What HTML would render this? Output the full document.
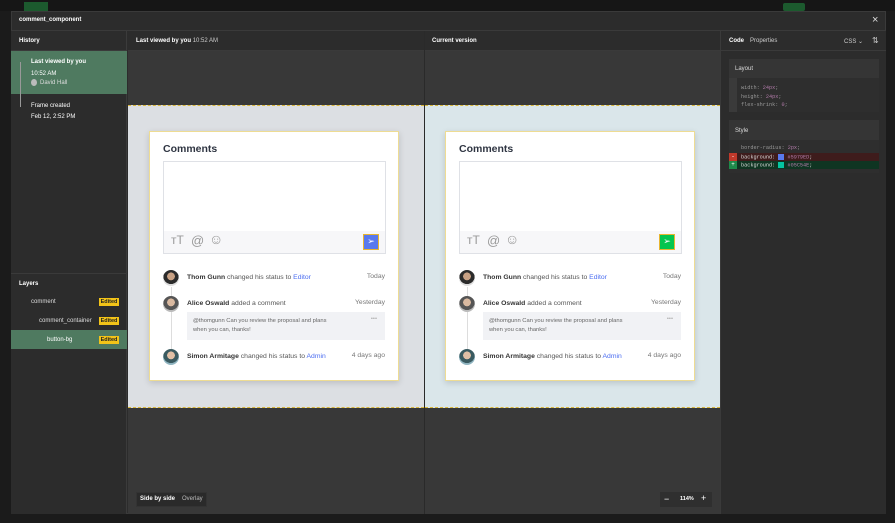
<!DOCTYPE html>
<html><head><meta charset="utf-8"><style>
*{box-sizing:border-box;margin:0;padding:0}
body{width:895px;height:523px;overflow:hidden;background:#1b1b1b;font-family:"Liberation Sans",sans-serif;position:relative;color:#eee}
.abs{position:absolute}
.modal{left:11px;top:11px;width:875px;height:503px;background:#2c2c2c;border:1px solid #3a3a3a}
.t{font-size:6px;color:#fff}
.card{position:absolute;top:131px;width:250px;height:250px;background:#fff;border:1px solid #eedc93;box-shadow:0 2px 6px rgba(0,0,0,.15);color:#333}
.card h3{position:absolute;left:13px;top:11px;font-size:10.5px;font-weight:bold;color:#2f3542}
.box{position:absolute;left:13px;top:29px;width:223px;height:93px;border:1px solid #dfe1e6;background:#fff}
.bar{position:absolute;left:0;bottom:0;width:100%;height:22px;background:#f7f7f9}
.row{position:absolute;left:13px;font-size:6.8px;color:#555;width:222px}
.row b{color:#333}
.av{position:absolute;left:0;width:16px;height:16px;border-radius:50%;background:radial-gradient(circle at 50% 40%,#c8a184 0 30%,#2b2b2b 32% 60%,#ddd 62%)}
.tx{position:absolute;left:24px;top:4px}
.dt{position:absolute;right:0;top:3px;color:#777}
.bubble{position:absolute;left:24px;top:16px;width:198px;height:28px;background:#f1f2f5;font-size:5.8px;color:#666;padding:5px 6px;line-height:9px}
.ed{position:absolute;left:99px;width:20px;height:8px;background:#f2c318;color:#222;font-size:5.5px;text-align:center;line-height:8px;font-weight:bold}
.code{font-family:"Liberation Mono",monospace;font-size:5.2px;color:#999}
.ic{position:absolute;top:3px;color:#999}
</style></head><body>
<div class="abs" style="left:0;top:0;width:895px;height:11px;background:#161616"></div>
<div class="abs" style="left:24px;top:2px;width:24px;height:9px;background:#1c5a2e"></div>
<div class="abs" style="left:783px;top:3px;width:22px;height:8px;background:#1c5a2e;border-radius:2px"></div>
<div class="abs modal"></div>
<div class="abs t" style="left:19px;top:17px;font-weight:bold">comment_component</div>
<div class="abs" style="left:872px;top:14px;font-size:11px;color:#ddd">×</div>
<div class="abs" style="left:11px;top:30px;width:875px;height:1px;background:#3a3a3a"></div>
<div class="abs" style="left:11px;top:31px;width:116px;height:483px;background:#2c2c2c;border-right:1px solid #3b3b3b"></div>
<div class="abs t" style="left:19px;top:38px;font-weight:bold">History</div>
<div class="abs" style="left:11px;top:50px;width:116px;height:1px;background:#3a3a3a"></div>
<div class="abs" style="left:11px;top:51px;width:116px;height:43px;background:#4f7a60"></div>
<div class="abs" style="left:20px;top:62px;width:1px;height:45px;background:#999"></div>
<div class="abs t" style="left:31px;top:59px;font-weight:bold">Last viewed by you</div>
<div class="abs t" style="left:31px;top:71px">10:52 AM</div>
<div class="abs" style="left:31px;top:79px;width:6px;height:7px;border-radius:50%;background:#bbb"></div>
<div class="abs t" style="left:40px;top:80px;color:#ddd">David Hall</div>
<div class="abs t" style="left:31px;top:103px">Frame created</div>
<div class="abs t" style="left:31px;top:114px">Feb 12, 2:52 PM</div>
<div class="abs" style="left:11px;top:273px;width:116px;height:1px;background:#3a3a3a"></div>
<div class="abs t" style="left:19px;top:281px;font-weight:bold">Layers</div>
<div class="abs t" style="left:31px;top:299px;color:#ddd">comment</div>
<div class="ed" style="top:298px">Edited</div>
<div class="abs t" style="left:39px;top:318px;color:#ddd">comment_container</div>
<div class="ed" style="top:317px">Edited</div>
<div class="abs" style="left:11px;top:330px;width:116px;height:19px;background:#4f7a60"></div>
<div class="abs t" style="left:47px;top:337px">button-bg</div>
<div class="ed" style="top:336px">Edited</div>
<div class="abs" style="left:128px;top:31px;width:592px;height:20px;background:#2c2c2c;border-bottom:1px solid #3a3a3a"></div>
<div class="abs t" style="left:136px;top:38px;font-weight:bold">Last viewed by you <span style="font-weight:normal;color:#ccc">10:52 AM</span></div>
<div class="abs t" style="left:432px;top:38px;font-weight:bold">Current version</div>
<div class="abs" style="left:128px;top:51px;width:592px;height:463px;background:#383838"></div>
<div class="abs" style="left:424px;top:31px;width:1px;height:483px;background:#2a2a2a"></div>
<div class="abs" style="left:128px;top:105px;width:296px;height:303px;background:#dcdfe3;border-top:1px dashed #d8b63a;border-bottom:1px dashed #d8b63a"></div>
<div class="abs" style="left:425px;top:105px;width:295px;height:303px;background:#dae6ea;border-top:1px dashed #d8b63a;border-bottom:1px dashed #d8b63a"></div>

<div class="card" style="left:149px">
<h3>Comments</h3>
<div class="box"><div class="bar">
<span class="ic" style="left:7px;top:2px;font-size:12px">ᴛT</span>
<span class="ic" style="left:27px;top:2px;font-size:13px">@</span>
<span class="ic" style="left:45px;top:0px;font-size:14px">☺</span>
<div style="position:absolute;right:6px;top:3px;width:16px;height:16px;background:#5979ed;border:1.5px solid #e8b530;color:#fff;font-size:9px;text-align:center;line-height:13px">➢</div>
</div></div>
<div class="row" style="top:138px"><div class="av" style="top:0"></div><div class="tx"><b>Thom Gunn</b> changed his status to <span style="color:#4a6cf0">Editor</span></div><div class="dt">Today</div></div>
<div class="abs" style="left:21px;top:155px;width:1px;height:70px;background:#ddd"></div>
<div class="row" style="top:164px"><div class="av" style="top:0;background:radial-gradient(circle at 50% 40%,#d9b9a0 0 30%,#555 32% 60%,#bbb 62%)"></div><div class="tx"><b>Alice Oswald</b> added a comment</div><div class="dt">Yesterday</div>
<div class="bubble">@thomgunn Can you review the proposal and plans<br>when you can, thanks!<span style="position:absolute;right:8px;top:3px;color:#aaa">•••</span></div></div>
<div class="row" style="top:217px"><div class="av" style="top:0;background:radial-gradient(circle at 50% 40%,#e0bfa5 0 30%,#3a5a60 32% 60%,#8fb4c0 62%)"></div><div class="tx"><b>Simon Armitage</b> changed his status to <span style="color:#4a6cf0">Admin</span></div><div class="dt">4 days ago</div></div>
</div>
<div class="card" style="left:445px">
<h3>Comments</h3>
<div class="box"><div class="bar">
<span class="ic" style="left:7px;top:2px;font-size:12px">ᴛT</span>
<span class="ic" style="left:27px;top:2px;font-size:13px">@</span>
<span class="ic" style="left:45px;top:0px;font-size:14px">☺</span>
<div style="position:absolute;right:6px;top:3px;width:16px;height:16px;background:#05c54e;border:1.5px solid #e8b530;color:#fff;font-size:9px;text-align:center;line-height:13px">➢</div>
</div></div>
<div class="row" style="top:138px"><div class="av" style="top:0"></div><div class="tx"><b>Thom Gunn</b> changed his status to <span style="color:#4a6cf0">Editor</span></div><div class="dt">Today</div></div>
<div class="abs" style="left:21px;top:155px;width:1px;height:70px;background:#ddd"></div>
<div class="row" style="top:164px"><div class="av" style="top:0;background:radial-gradient(circle at 50% 40%,#d9b9a0 0 30%,#555 32% 60%,#bbb 62%)"></div><div class="tx"><b>Alice Oswald</b> added a comment</div><div class="dt">Yesterday</div>
<div class="bubble">@thomgunn Can you review the proposal and plans<br>when you can, thanks!<span style="position:absolute;right:8px;top:3px;color:#aaa">•••</span></div></div>
<div class="row" style="top:217px"><div class="av" style="top:0;background:radial-gradient(circle at 50% 40%,#e0bfa5 0 30%,#3a5a60 32% 60%,#8fb4c0 62%)"></div><div class="tx"><b>Simon Armitage</b> changed his status to <span style="color:#4a6cf0">Admin</span></div><div class="dt">4 days ago</div></div>
</div>

<div class="abs" style="left:136px;top:492px;width:71px;height:15px;background:#2a2a2a;border:1px solid #333"></div>
<div class="abs t" style="left:140px;top:496px;font-weight:bold">Side by side</div>
<div class="abs t" style="left:182px;top:496px;color:#bbb">Overlay</div>
<div class="abs" style="left:660px;top:492px;width:52px;height:15px;background:#2f2f2f"></div>
<div class="abs t" style="left:664px;top:494px;font-size:9px">−</div>
<div class="abs t" style="left:680px;top:496px;font-size:5.5px;font-weight:bold">114%</div>
<div class="abs t" style="left:701px;top:493px;font-size:9px">+</div>
<div class="abs" style="left:720px;top:31px;width:166px;height:483px;background:#2c2c2c;border-left:1px solid #3a3a3a"></div>
<div class="abs t" style="left:729px;top:38px;font-weight:bold">Code</div>
<div class="abs t" style="left:750px;top:38px;color:#ccc">Properties</div>
<div class="abs t" style="left:844px;top:38px;color:#ccc">CSS ⌄</div>
<div class="abs t" style="left:872px;top:36px;color:#ccc;font-size:8px">⇅</div>
<div class="abs" style="left:720px;top:50px;width:166px;height:1px;background:#3a3a3a"></div>
<div class="abs" style="left:729px;top:59px;width:150px;height:53px;background:#353535"></div>
<div class="abs t" style="left:735px;top:66px;color:#ddd">Layout</div>
<div class="abs" style="left:729px;top:78px;width:150px;height:34px;background:#2e2e2e"></div>
<div class="abs" style="left:729px;top:78px;width:8px;height:34px;background:#3a3a3a"></div>
<div class="abs code" style="left:741px;top:84px;line-height:8.5px">width: <span style="color:#b07aa8">24px</span>;<br>height: <span style="color:#b07aa8">24px</span>;<br>flex-shrink: <span style="color:#b07aa8">0</span>;</div>
<div class="abs" style="left:729px;top:120px;width:150px;height:53px;background:#353535"></div>
<div class="abs t" style="left:735px;top:128px;color:#ddd">Style</div>
<div class="abs" style="left:729px;top:140px;width:150px;height:33px;background:#2e2e2e"></div>
<div class="abs code" style="left:741px;top:145px">border-radius: <span style="color:#b07aa8">2px</span>;</div>
<div class="abs" style="left:729px;top:153px;width:150px;height:8px;background:#3e1c1c"></div>
<div class="abs" style="left:729px;top:153px;width:8px;height:8px;background:#c0392b;color:#fff;font-size:6px;text-align:center;line-height:8px">-</div>
<div class="abs code" style="left:741px;top:154px;color:#ddd">background: <span style="display:inline-block;width:6px;height:6px;background:#5979ed;vertical-align:middle"></span> <span style="color:#b07aa8">#5979ED</span>;</div>
<div class="abs" style="left:729px;top:161px;width:150px;height:8px;background:#0f3522"></div>
<div class="abs" style="left:729px;top:161px;width:8px;height:8px;background:#1e8a4a;color:#fff;font-size:6px;text-align:center;line-height:8px">+</div>
<div class="abs code" style="left:741px;top:162px;color:#ddd">background: <span style="display:inline-block;width:6px;height:6px;background:#05c5a0;vertical-align:middle"></span> <span style="color:#b07aa8">#05C54E</span>;</div>
</body></html>
